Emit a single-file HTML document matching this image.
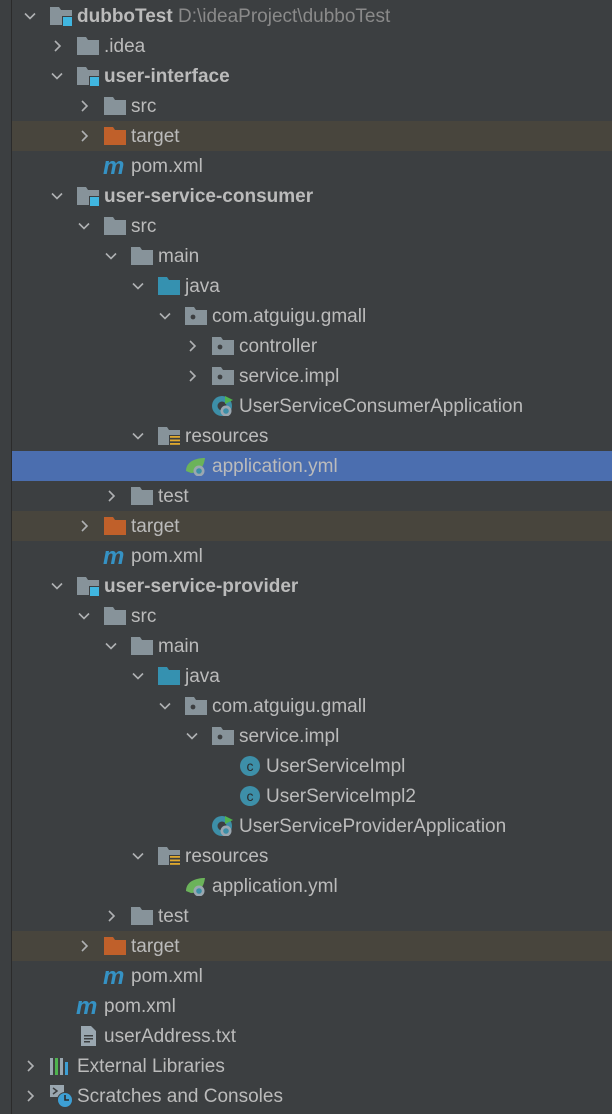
<!DOCTYPE html>
<html><head><meta charset="utf-8"><style>
body{margin:0;width:612px;height:1114px;background:#3c3f41;overflow:hidden;position:relative;font-family:"Liberation Sans","DejaVu Sans",sans-serif;}
.strip{position:absolute;left:0;top:0;width:11px;height:1114px;background:#3c3f41;border-right:1px solid #2b2b2b;}
.r{position:absolute;left:12px;right:0;height:30px;}
.bg{background:#48453d;}
.sel{background:#4b6eaf;}
.t{position:absolute;top:5px;font-size:19px;color:#bbbbbb;white-space:nowrap;line-height:22px;}
.b{font-weight:bold;}
.g{color:#8a8a8a;font-weight:normal;}
.a{position:absolute;top:9px;width:12px;height:12px;}
.i{position:absolute;top:5px;width:22px;height:20px;}
.m{position:absolute;top:2px;font:italic bold 24px "Liberation Sans",sans-serif;color:#3592c4;}
</style></head><body>
<svg width="0" height="0" style="position:absolute">
<defs>
<symbol id="ar" viewBox="0 0 12 12"><path d="M4 1 L9 6 L4 11" fill="none" stroke="#afb1b3" stroke-width="1.6"/></symbol>
<symbol id="ad" viewBox="0 0 12 12"><path d="M1 3.5 L6 8.5 L11 3.5" fill="none" stroke="#afb1b3" stroke-width="1.6"/></symbol>
<symbol id="f" viewBox="0 0 22 20"><path d="M0 1h9l2 3h11v15H0z" fill="#87939a"/></symbol>
<symbol id="fo" viewBox="0 0 22 20"><path d="M0 1h9l2 3h11v15H0z" fill="#c0602a"/></symbol>
<symbol id="fj" viewBox="0 0 22 20"><path d="M0 1h9l2 3h11v15H0z" fill="#3591b0"/></symbol>
<symbol id="fm" viewBox="0 0 22 20"><path d="M0 1h9l2 3h11v15H0z" fill="#87939a"/><rect x="12" y="10" width="10" height="10" fill="#3c3f41"/><rect x="13" y="11" width="9" height="9" fill="#40b6e0"/></symbol>
<symbol id="fp" viewBox="0 0 22 20"><path d="M0 1h9l2 3h11v15H0z" fill="#87939a"/><circle cx="8" cy="11" r="2.4" fill="#3c3f41"/></symbol>
<symbol id="fr" viewBox="0 0 22 20"><path d="M0 1h9l2 3h11v15H0z" fill="#87939a"/><rect x="11" y="9" width="11" height="11" fill="#3c3f41"/><g fill="#e0a92e"><rect x="12" y="10" width="10" height="1.8"/><rect x="12" y="13.5" width="10" height="1.8"/><rect x="12" y="17" width="10" height="1.8"/></g></symbol>
<symbol id="c" viewBox="0 0 22 20"><circle cx="11" cy="10" r="10" fill="#3d8fa8"/><text x="11" y="15" font-size="14" text-anchor="middle" fill="#2b2b2b" font-family="Liberation Sans">c</text></symbol>
<symbol id="sp" viewBox="0 0 22 20"><circle cx="10" cy="10" r="10" fill="#3d8fa8"/><circle cx="10" cy="10" r="4.5" fill="#3c3f41"/><path d="M13 0 L21 4 L13 8z" fill="#4fb34f"/><circle cx="14" cy="15" r="5.5" fill="#9aa7b0"/><circle cx="14" cy="15" r="2.8" fill="#3d8fa8"/></symbol>
<symbol id="y" viewBox="0 0 22 20"><path d="M1 15 C1 6 10 2 20 2 C19 10 15 17 6 17z" fill="#6bb35a"/><circle cx="14" cy="15" r="5.5" fill="#9aa7b0"/><circle cx="14" cy="15" r="2.8" fill="#3d8fa8"/></symbol>
<symbol id="txt" viewBox="0 0 22 20"><path d="M4 0h10l5 5v15H4z" fill="#9aa7b0"/><g fill="#3c3f41"><rect x="7" y="9" width="9" height="1.5"/><rect x="7" y="12" width="9" height="1.5"/><rect x="7" y="15" width="6" height="1.5"/></g></symbol>
<symbol id="lib" viewBox="0 0 22 20"><rect x="1" y="2" width="3" height="17" fill="#9aa7b0"/><rect x="6" y="2" width="3" height="17" fill="#4fb34f"/><rect x="11" y="2" width="3" height="17" fill="#9aa7b0"/><rect x="16" y="6" width="3" height="13" fill="#3d9fd4"/></symbol>
<symbol id="scr" viewBox="0 0 24 24"><rect x="1" y="1" width="14" height="12" fill="#9aa7b0"/><path d="M4 4l4 3-4 3" stroke="#3c3f41" fill="none" stroke-width="1.5"/><circle cx="16" cy="16" r="8" fill="#3c3f41"/><circle cx="16" cy="16" r="7" fill="#3d9fd4"/><path d="M16 11v5h4" stroke="#2b2b2b" fill="none" stroke-width="1.6"/></symbol>
</defs></svg>
<div class="strip"></div>

<div class="r" style="top:1px"><svg class="a" style="left:12px"><use href="#ad"/></svg><svg class="i" style="left:38px"><use href="#fm"/></svg><span class="t b" style="left:65px">dubboTest <span class="g">D:\ideaProject\dubboTest</span></span></div>
<div class="r" style="top:31px"><svg class="a" style="left:39px"><use href="#ar"/></svg><svg class="i" style="left:65px"><use href="#f"/></svg><span class="t" style="left:92px">.idea</span></div>
<div class="r" style="top:61px"><svg class="a" style="left:39px"><use href="#ad"/></svg><svg class="i" style="left:65px"><use href="#fm"/></svg><span class="t b" style="left:92px">user-interface</span></div>
<div class="r" style="top:91px"><svg class="a" style="left:66px"><use href="#ar"/></svg><svg class="i" style="left:92px"><use href="#f"/></svg><span class="t" style="left:119px">src</span></div>
<div class="r bg" style="top:121px"><svg class="a" style="left:66px"><use href="#ar"/></svg><svg class="i" style="left:92px"><use href="#fo"/></svg><span class="t" style="left:119px">target</span></div>
<div class="r" style="top:151px"><span class="m" style="left:91px">m</span><span class="t" style="left:119px">pom.xml</span></div>
<div class="r" style="top:181px"><svg class="a" style="left:39px"><use href="#ad"/></svg><svg class="i" style="left:65px"><use href="#fm"/></svg><span class="t b" style="left:92px">user-service-consumer</span></div>
<div class="r" style="top:211px"><svg class="a" style="left:66px"><use href="#ad"/></svg><svg class="i" style="left:92px"><use href="#f"/></svg><span class="t" style="left:119px">src</span></div>
<div class="r" style="top:241px"><svg class="a" style="left:93px"><use href="#ad"/></svg><svg class="i" style="left:119px"><use href="#f"/></svg><span class="t" style="left:146px">main</span></div>
<div class="r" style="top:271px"><svg class="a" style="left:120px"><use href="#ad"/></svg><svg class="i" style="left:146px"><use href="#fj"/></svg><span class="t" style="left:173px">java</span></div>
<div class="r" style="top:301px"><svg class="a" style="left:147px"><use href="#ad"/></svg><svg class="i" style="left:173px"><use href="#fp"/></svg><span class="t" style="left:200px">com.atguigu.gmall</span></div>
<div class="r" style="top:331px"><svg class="a" style="left:174px"><use href="#ar"/></svg><svg class="i" style="left:200px"><use href="#fp"/></svg><span class="t" style="left:227px">controller</span></div>
<div class="r" style="top:361px"><svg class="a" style="left:174px"><use href="#ar"/></svg><svg class="i" style="left:200px"><use href="#fp"/></svg><span class="t" style="left:227px">service.impl</span></div>
<div class="r" style="top:391px"><svg class="i" style="left:200px"><use href="#sp"/></svg><span class="t" style="left:227px">UserServiceConsumerApplication</span></div>
<div class="r" style="top:421px"><svg class="a" style="left:120px"><use href="#ad"/></svg><svg class="i" style="left:146px"><use href="#fr"/></svg><span class="t" style="left:173px">resources</span></div>
<div class="r sel" style="top:451px"><svg class="i" style="left:173px"><use href="#y"/></svg><span class="t" style="left:200px">application.yml</span></div>
<div class="r" style="top:481px"><svg class="a" style="left:93px"><use href="#ar"/></svg><svg class="i" style="left:119px"><use href="#f"/></svg><span class="t" style="left:146px">test</span></div>
<div class="r bg" style="top:511px"><svg class="a" style="left:66px"><use href="#ar"/></svg><svg class="i" style="left:92px"><use href="#fo"/></svg><span class="t" style="left:119px">target</span></div>
<div class="r" style="top:541px"><span class="m" style="left:91px">m</span><span class="t" style="left:119px">pom.xml</span></div>
<div class="r" style="top:571px"><svg class="a" style="left:39px"><use href="#ad"/></svg><svg class="i" style="left:65px"><use href="#fm"/></svg><span class="t b" style="left:92px">user-service-provider</span></div>
<div class="r" style="top:601px"><svg class="a" style="left:66px"><use href="#ad"/></svg><svg class="i" style="left:92px"><use href="#f"/></svg><span class="t" style="left:119px">src</span></div>
<div class="r" style="top:631px"><svg class="a" style="left:93px"><use href="#ad"/></svg><svg class="i" style="left:119px"><use href="#f"/></svg><span class="t" style="left:146px">main</span></div>
<div class="r" style="top:661px"><svg class="a" style="left:120px"><use href="#ad"/></svg><svg class="i" style="left:146px"><use href="#fj"/></svg><span class="t" style="left:173px">java</span></div>
<div class="r" style="top:691px"><svg class="a" style="left:147px"><use href="#ad"/></svg><svg class="i" style="left:173px"><use href="#fp"/></svg><span class="t" style="left:200px">com.atguigu.gmall</span></div>
<div class="r" style="top:721px"><svg class="a" style="left:174px"><use href="#ad"/></svg><svg class="i" style="left:200px"><use href="#fp"/></svg><span class="t" style="left:227px">service.impl</span></div>
<div class="r" style="top:751px"><svg class="i" style="left:227px"><use href="#c"/></svg><span class="t" style="left:254px">UserServiceImpl</span></div>
<div class="r" style="top:781px"><svg class="i" style="left:227px"><use href="#c"/></svg><span class="t" style="left:254px">UserServiceImpl2</span></div>
<div class="r" style="top:811px"><svg class="i" style="left:200px"><use href="#sp"/></svg><span class="t" style="left:227px">UserServiceProviderApplication</span></div>
<div class="r" style="top:841px"><svg class="a" style="left:120px"><use href="#ad"/></svg><svg class="i" style="left:146px"><use href="#fr"/></svg><span class="t" style="left:173px">resources</span></div>
<div class="r" style="top:871px"><svg class="i" style="left:173px"><use href="#y"/></svg><span class="t" style="left:200px">application.yml</span></div>
<div class="r" style="top:901px"><svg class="a" style="left:93px"><use href="#ar"/></svg><svg class="i" style="left:119px"><use href="#f"/></svg><span class="t" style="left:146px">test</span></div>
<div class="r bg" style="top:931px"><svg class="a" style="left:66px"><use href="#ar"/></svg><svg class="i" style="left:92px"><use href="#fo"/></svg><span class="t" style="left:119px">target</span></div>
<div class="r" style="top:961px"><span class="m" style="left:91px">m</span><span class="t" style="left:119px">pom.xml</span></div>
<div class="r" style="top:991px"><span class="m" style="left:64px">m</span><span class="t" style="left:92px">pom.xml</span></div>
<div class="r" style="top:1021px"><svg class="i" style="left:65px"><use href="#txt"/></svg><span class="t" style="left:92px">userAddress.txt</span></div>
<div class="r" style="top:1051px"><svg class="a" style="left:12px"><use href="#ar"/></svg><svg class="i" style="left:37px"><use href="#lib"/></svg><span class="t" style="left:65px">External Libraries</span></div>
<div class="r" style="top:1081px"><svg class="a" style="left:12px"><use href="#ar"/></svg><svg class="i" style="left:37px;width:24px;height:24px;top:3px" viewBox="0 0 24 24"><use href="#scr"/></svg><span class="t" style="left:65px">Scratches and Consoles</span></div>
</body></html>
